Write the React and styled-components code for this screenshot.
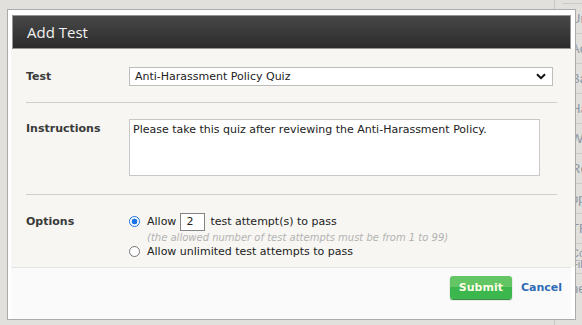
import React from "react"
import styled, { createGlobalStyle } from "styled-components"

const GlobalStyle = createGlobalStyle`
  html, body {
    margin: 0;
    padding: 0;
  }
  body {
    background: #e1e0dd;
    font-family: "DejaVu Sans", Verdana, sans-serif;
    font-size: 11px;
    color: #222;
  }
`

const Page = styled.div`
  position: relative;
  display: flex;
  width: 582px;
  height: 325px;
  overflow: hidden;
`

const Main = styled.div`
  flex: 1;
`

const Sidebar = styled.aside`
  width: 27px;
  border-left: 1px solid #c9c8c4;
  padding-top: 3px;
  overflow: hidden;
`

const SideRow = styled.div`
  height: 29px;
  margin-left: 8px;
  padding-left: 8px;
  border-top: 1px solid #cbcac6;
  font-family: "Liberation Sans", Arial, sans-serif;
  font-size: ${p => (p.$double ? "11px" : "13px")};
  line-height: ${p => (p.$double ? "11px" : "29px")};
  padding-top: ${p => (p.$double ? "4px" : "0")};
  box-sizing: ${p => (p.$double ? "border-box" : "content-box")};
  height: ${p => (p.$double ? "30px" : "29px")};
  color: #8d97a4;
  white-space: nowrap;
`

const Dialog = styled.section`
  position: absolute;
  left: 7px;
  top: 9px;
  width: 569px;
  height: 311px;
  box-sizing: border-box;
  border: 1px solid #ababab;
  background: #fff;
  display: flex;
  flex-direction: column;
`

const Header = styled.header`
  margin: 5px 4px 0 4px;
  height: 34px;
  box-sizing: border-box;
  border: 1px solid #959595;
  background: linear-gradient(#484848, #2b2b2b);
  color: #f2f2f2;
  font-family: "Open Sans", sans-serif;
  font-size: 15px;
  padding-left: 14px;
  display: flex;
  align-items: center;
`

const Body = styled.div`
  flex: 1;
  margin-left: 3px;
  background: #f7f6f2;
  padding: 0 18px 0 15px;
`

const Section = styled.div`
  display: grid;
  grid-template-columns: 103px 1fr;
  align-items: start;
  padding-top: ${p => p.$top}px;
  padding-bottom: ${p => p.$bottom}px;
  border-bottom: ${p => (p.$last ? "none" : "1px solid #cfcfcf")};
`

const Label = styled.div`
  font-weight: bold;
  line-height: 19px;
  color: #3a3a3a;
`

const SelectBox = styled.div`
  width: 424px;
  height: 19px;
  box-sizing: border-box;
  border: 1px solid #bdbdbd;
  background: #fff;
  display: flex;
  align-items: center;
  justify-content: space-between;
  padding: 0 6px 0 5px;
  color: #222;
`

const TextArea = styled.textarea`
  width: 411px;
  height: 57px;
  box-sizing: border-box;
  border: 1px solid #c8c8c8;
  padding: 2px 3px;
  font-family: inherit;
  font-size: 11px;
  line-height: 15px;
  color: #222;
  resize: none;
  background: #fff;
  display: block;
`

const Options = styled.div`
  display: flex;
  flex-direction: column;
`

const OptionRow = styled.label`
  display: flex;
  align-items: center;
  height: ${p => p.$h}px;
  color: #222;
`

const Radio = styled.input.attrs({ type: "radio" })`
  appearance: none;
  width: 11px;
  height: 11px;
  margin: 0 7px 0 0;
  box-sizing: border-box;
  border: 1px solid #767676;
  border-radius: 50%;
  background: #fff;

  &:checked {
    border-color: #1a73e8;
    background: radial-gradient(circle, #1a73e8 0 2.6px, #fff 3.2px);
  }
`

const CountInput = styled.input`
  width: 25px;
  height: 18px;
  box-sizing: border-box;
  border: 1px solid #858585;
  margin: 0 5px 0 4px;
  padding: 0 0 0 5px;
  font-family: inherit;
  font-size: 11px;
  color: #222;
  background: #fff;
`

const Hint = styled.div`
  padding-left: 18px;
  font-style: italic;
  font-size: 10px;
  line-height: 13px;
  color: #b3b3b3;
`

const Footer = styled.footer`
  height: 43px;
  margin: 0 4px 0 3px;
  border-top: 1px solid #e4e4e4;
  background: #fafafa;
  display: flex;
  justify-content: flex-end;
  align-items: flex-start;
  gap: 9px;
  padding: 8px 9px 0 0;
`

const SubmitButton = styled.button`
  width: 62px;
  height: 23px;
  border: none;
  border-radius: 3px;
  background: linear-gradient(#63c563 0 50%, #3cb74e 50%);
  box-shadow: 0 1px 1px #2a7f38;
  color: #fffde6;
  font-family: inherit;
  font-size: 11px;
  font-weight: bold;
  padding: 0;
`

const CancelLink = styled.a`
  color: #2f6cb5;
  font-weight: bold;
  font-size: 11px;
  line-height: 23px;
  text-decoration: none;
`

const sideItems = ["Unread", "Accounts", "Backups", "Handbook", "WMS", "Roles", "ops", "TFA", null, "network"]

export default function App() {
  return (
    <Page>
      <GlobalStyle />
      <Main />
      <Sidebar>
        {sideItems.map((item, i) =>
          item ? (
            <SideRow key={i}>{item}</SideRow>
          ) : (
            <SideRow key={i} $double>
              Courses
              <br />
              Files
            </SideRow>
          )
        )}
      </Sidebar>

      <Dialog>
        <Header>Add Test</Header>
        <Body>
          <Section $top={18} $bottom={16}>
            <Label>Test</Label>
            <SelectBox>
              <span>Anti-Harassment Policy Quiz</span>
              <svg width="10" height="7" viewBox="0 0 10 7">
                <path d="M1 1.2 L5 5.2 L9 1.2" fill="none" stroke="#111" strokeWidth="2" />
              </svg>
            </SelectBox>
          </Section>

          <Section $top={16} $bottom={18}>
            <Label>Instructions</Label>
            <TextArea defaultValue="Please take this quiz after reviewing the Anti-Harassment Policy." />
          </Section>

          <Section $top={17} $bottom={0} $last>
            <Label>Options</Label>
            <Options>
              <OptionRow $h={19}>
                <Radio name="attempts" defaultChecked />
                Allow
                <CountInput defaultValue="2" />
                test attempt(s) to pass
              </OptionRow>
              <Hint>(the allowed number of test attempts must be from 1 to 99)</Hint>
              <OptionRow $h={15}>
                <Radio name="attempts" />
                Allow unlimited test attempts to pass
              </OptionRow>
            </Options>
          </Section>
        </Body>
        <Footer>
          <SubmitButton>Submit</SubmitButton>
          <CancelLink href="#">Cancel</CancelLink>
        </Footer>
      </Dialog>
    </Page>
  )
}
